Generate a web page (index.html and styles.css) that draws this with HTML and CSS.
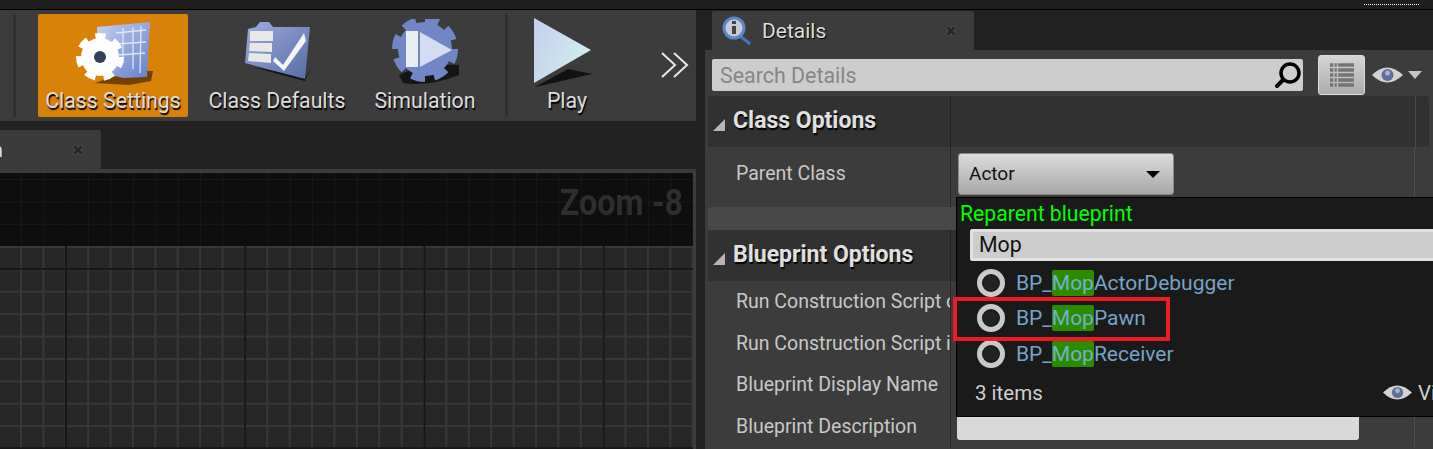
FILE: index.html
```html
<!DOCTYPE html>
<html lang="en">
<head>
  <meta charset="UTF-8">
  <meta name="viewport" content="width=device-width, initial-scale=1.0">
  <title>Blueprint Editor</title>
  <link rel="stylesheet" href="styles.css">
</head>
<body>
  <div class="top-strip">
    <span class="top-label">Parent class:</span>
    <span class="top-dots"></span>
  </div>
  <div class="editor">
    <div class="left-col">
      <div class="toolbar">
        <div class="sep sep-first"></div>
        <div class="tool-btn active">
          <svg class="tool-icon" width="84" height="66" viewBox="0 0 84 66">
            <defs>
              <linearGradient id="sheet" x1="0" y1="0" x2="1" y2="1">
                <stop offset="0" stop-color="#c6d0f0"/>
                <stop offset="1" stop-color="#6480cc"/>
              </linearGradient>
              <filter id="soft"><feGaussianBlur stdDeviation="0.5"/></filter>
            </defs>
            <path d="M24 62 L58 64 L80 60 L82 50 L60 50Z" fill="#5a3300" opacity="0.8" filter="url(#soft)"/>
            <path d="M26 6 L79 1 L76 56 L52 57 L26 50Z" fill="url(#sheet)"/>
            <path d="M45 12 L75 9 M46 23 L75 21 M48 34 L74 32 M52 7 L52 42 M62 6 L62 48 M70 5 L69 52" stroke="#e7ecfb" stroke-width="1.3" fill="none" opacity="0.9"/>
            <g filter="url(#soft)">
              <circle cx="29" cy="36" r="19" fill="#fff"/>
              <circle cx="29" cy="36" r="21" fill="none" stroke="#fff" stroke-width="6" pathLength="14" stroke-dasharray="1.100 .900"/>
              <circle cx="29" cy="36" r="6" fill="#33405c"/>
            </g>
          </svg>
          <span class="tool-label">Class Settings</span>
        </div>
        <div class="tool-btn defaults">
          <svg class="tool-icon" width="70" height="66" viewBox="0 0 70 66">
            <defs>
              <linearGradient id="board" x1="0" y1="0" x2="1" y2="1">
                <stop offset="0" stop-color="#9fade0"/>
                <stop offset="1" stop-color="#566aa4"/>
              </linearGradient>
            </defs>
            <path d="M10 48 L63 62 L70 46 L64 58Z" fill="#151515"/>
            <path d="M6 10 L14 8 L18 3 L27 3 L31 8 L68 8 L63 60 L3 44Z" fill="url(#board)"/>
            <path d="M8 12 L31 12 L31 22 L8 22Z M8 24 L30 24 L30 33 L7 32Z M7 34 L29 35 L29 44 L6 42Z" fill="#e8e8e8"/>
            <path d="M33 38 L41 46 L62 14 L64 22 L42 52 L31 42Z" fill="#f4f4f4"/>
          </svg>
          <span class="tool-label">Class Defaults</span>
        </div>
        <div class="tool-btn">
          <svg class="tool-icon" width="72" height="66" viewBox="0 0 72 66">
            <path d="M10 56 Q34 44 70 46 L70 56 Q40 68 14 64Z" fill="#151515"/>
            <circle cx="36" cy="30" r="27" fill="#7286c6"/>
            <circle cx="36" cy="30" r="29" fill="none" stroke="#7286c6" stroke-width="8" pathLength="16" stroke-dasharray="1.200 .800"/>
            <rect x="17" y="12" width="12" height="36" fill="#e9eef2"/>
            <path d="M31 13 L63 31 L31 48Z" fill="#d3dcf0"/>
          </svg>
          <span class="tool-label">Simulation</span>
        </div>
        <div class="sep sep-play"></div>
        <div class="tool-btn play">
          <svg class="tool-icon" width="70" height="72" viewBox="0 0 70 72">
            <defs>
              <linearGradient id="tri" x1="0" y1="0" x2="1" y2="0.4">
                <stop offset="0" stop-color="#c5cfec"/>
                <stop offset="1" stop-color="#d0ecee"/>
              </linearGradient>
            </defs>
            <path d="M3 70 L60 57 L36 52Z" fill="#111"/>
            <path d="M2 1 L59 33 L2 66Z" fill="url(#tri)"/>
          </svg>
          <span class="tool-label">Play</span>
        </div>
        <svg class="more" width="30" height="30" viewBox="0 0 30 30">
          <path d="M2 3 L15 15 L2 27 M14 3 L27 15 L14 27" fill="none" stroke="#e8e8e8" stroke-width="2"/>
        </svg>
      </div>
      <div class="tab-row">
        <div class="graph-tab">
          <span class="tab-cut">n</span>
          <span class="close">&#10006;</span>
        </div>
      </div>
      <div class="graph">
        <div class="graph-head">
          <span class="zoom-label">Zoom -8</span>
        </div>
        <div class="graph-body"></div>
      </div>
    </div>

    <div class="details">
      <div class="details-tabs">
        <div class="details-tab">
          <svg width="30" height="30" viewBox="0 0 30 30">
            <path d="M17 19 L28 28" stroke="#3f78c8" stroke-width="3"/>
            <circle cx="12" cy="12" r="10" fill="#c8ccd4" stroke="#5c86cc" stroke-width="3"/>
            <rect x="10" y="10" width="4" height="8" fill="#444"/>
            <rect x="10" y="5" width="4" height="3" fill="#444"/>
          </svg>
          <span class="details-title">Details</span>
          <span class="close">&#10006;</span>
        </div>
      </div>
      <div class="details-panel">
        <div class="search-row">
          <div class="search-box">
            <span class="search-hint">Search Details</span>
            <svg width="30" height="28" viewBox="0 0 30 28">
              <circle cx="17" cy="12" r="9" fill="none" stroke="#000" stroke-width="3.500"/>
              <path d="M10 19 L4 25" stroke="#000" stroke-width="4" stroke-linecap="round"/>
            </svg>
          </div>
          <div class="table-btn">
            <svg width="24" height="24" viewBox="0 0 24 24">
              <path d="M0 2h24M0 7h24M0 12h24M0 17h24M0 22h24" stroke="#747474" stroke-width="3.400"/>
              <path d="M4 0v24M7.500 0v24" stroke="#bcbcbc" stroke-width="1.400"/>
            </svg>
          </div>
          <svg class="eye" width="31" height="18" viewBox="0 0 31 18">
            <path d="M0 9 Q15 -6 31 9 Q15 24 0 9Z" fill="#d2d2d2"/>
            <circle cx="15.500" cy="9" r="6" fill="#5e7099"/>
            <circle cx="15.500" cy="7" r="2.500" fill="#a9b4cc"/>
          </svg>
          <span class="eye-caret"></span>
        </div>

        <div class="section-head">
          <span class="caret"></span>
          <span class="section-name">Class Options</span>
        </div>
        <div class="prop-row parent-row">
          <span class="prop-name">Parent Class</span>
          <div class="prop-value">
            <div class="combo">
              <span>Actor</span>
              <span class="combo-caret"></span>
            </div>
          </div>
        </div>
        <div class="section-gap"></div>
        <div class="section-head">
          <span class="caret"></span>
          <span class="section-name">Blueprint Options</span>
        </div>
        <div class="prop-row"><span class="prop-name">Run Construction Script on Drag</span><div class="prop-value"></div></div>
        <div class="prop-row"><span class="prop-name">Run Construction Script in Sequencer</span><div class="prop-value"></div></div>
        <div class="prop-row"><span class="prop-name">Blueprint Display Name</span><div class="prop-value"></div></div>
        <div class="prop-row"><span class="prop-name">Blueprint Description</span><div class="prop-value"><div class="desc-field"></div></div></div>
      </div>

      <div class="picker">
        <div class="picker-title">Reparent blueprint</div>
        <div class="picker-input">Mop</div>
        <div class="picker-list">
          <div class="picker-item"><span class="radio"></span><span class="bp-name">BP_<mark>Mop</mark>ActorDebugger</span></div>
          <div class="picker-item"><span class="radio"></span><span class="bp-name">BP_<mark>Mop</mark>Pawn</span></div>
          <div class="picker-item"><span class="radio"></span><span class="bp-name">BP_<mark>Mop</mark>Receiver</span></div>
        </div>
        <div class="picker-foot">
          <span>3 items</span>
          <div class="view-opts">
            <svg width="29" height="17" viewBox="0 0 31 18">
              <path d="M0 9 Q15 -6 31 9 Q15 24 0 9Z" fill="#d2d2d2"/>
              <circle cx="15.500" cy="9" r="6" fill="#5e7099"/>
              <circle cx="15.500" cy="7" r="2.500" fill="#a9b4cc"/>
            </svg>
            <span>View Options</span>
          </div>
        </div>
        <div class="highlight"></div>
      </div>
    </div>
  </div>
</body>
</html>
```
FILE: styles.css
```css
* {
  box-sizing: border-box;
}
html, body {
  margin: 0;
  padding: 0;
  height: 449px;
  overflow: hidden;
}
body {
  font-family: Roboto, "Liberation Sans", sans-serif;
  background-color: #222222;
  color: #c8c8c8;
}
.top-strip {
  height: 10px;
  background-color: #1e1e1e;
  border-bottom: 1px solid #000000;
  position: relative;
  overflow: hidden;
}
.top-label {
  position: absolute;
  left: 1233px;
  top: -18px;
  font-size: 19px;
  color: #d0d0d0;
}
.top-dots {
  position: absolute;
  left: 1364px;
  top: 4px;
  width: 55px;
  border-top: 1px dotted #ffffff;
}
.editor {
  display: flex;
  height: 439px;
}

/* left side */
.left-col {
  width: 696px;
  display: flex;
  flex-direction: column;
}
.toolbar {
  height: 111px;
  background-color: #3c3c3c;
  display: flex;
  align-items: center;
  padding-left: 13px;
}
.sep {
  width: 3px;
  height: 103px;
  background-color: #2f2f2f;
}
.sep-first {
  margin-right: 22px;
}
.sep-play {
  margin-left: 6px;
  margin-right: 8px;
}
.tool-btn {
  width: 148px;
  height: 103px;
  border-radius: 2px;
  display: flex;
  flex-direction: column;
  align-items: center;
  justify-content: flex-end;
  padding-bottom: 4px;
  position: relative;
}
.tool-btn.active {
  width: 150px;
  background-color: #d9820a;
}
.tool-btn.defaults {
  margin-left: 15px;
}
.tool-btn.play {
  width: 102px;
}
.tool-icon {
  position: absolute;
  left: 50%;
  top: 5px;
  transform: translateX(-50%);
}
.tool-btn.active .tool-icon {
  top: 7px;
}
.tool-btn.play .tool-icon {
  top: 3px;
}
.tool-label {
  font-size: 21.300px;
  line-height: 24px;
  color: #dcdcdc;
  text-shadow: 1px 2px 1px #000000;
  white-space: nowrap;
}
.more {
  margin-left: 42px;
  margin-top: -2px;
}
.tab-row {
  height: 48px;
  padding-top: 9px;
  background-color: #222222;
}
.graph-tab {
  width: 101px;
  height: 39px;
  background-color: #3a3a3a;
  border-radius: 0 2px 0 0;
  display: flex;
  align-items: center;
  justify-content: space-between;
  padding-right: 17px;
  font-size: 20px;
  overflow: hidden;
}
.tab-cut {
  margin-left: -8px;
  color: #dcdcdc;
  opacity: 0.99;
}
.close {
  font-size: 14px;
  line-height: 14px;
  color: #262626;
  text-shadow: 0 0 2px #6a6a6a;
}
.graph {
  flex: 1;
  display: flex;
  flex-direction: column;
  border-top: 4px solid #3c3c3c;
  border-right: 3px solid #3c3c3c;
}
.graph-head {
  height: 73px;
  background-color: #0e0e0e;
  background-image:
    linear-gradient(to right, #0a0a0a 0, #0a0a0a 1px, transparent 1px),
    linear-gradient(to right, #181818 0, #181818 1px, transparent 1px),
    linear-gradient(to bottom, #181818 0, #181818 1px, transparent 1px);
  background-size: 179.2px 100%, 22.4px 100%, 100% 22.4px;
  background-position: 66px 0, 21px 0, 0 6px;
  display: flex;
  justify-content: flex-end;
  align-items: flex-start;
}
.zoom-label {
  font-size: 36px;
  font-weight: 700;
  line-height: 42px;
  margin-top: 9px;
  margin-right: 10px;
  color: #2e2e2e;
  transform: scaleX(0.9);
  transform-origin: right center;
  white-space: nowrap;
}
.graph-body {
  flex: 1;
  background-color: #272727;
  background-image:
    linear-gradient(to right, #171717 0, #171717 2px, transparent 2px),
    linear-gradient(to bottom, #171717 0, #171717 2px, transparent 2px),
    linear-gradient(to right, #383838 0, #383838 2px, transparent 2px),
    linear-gradient(to bottom, #383838 0, #383838 2px, transparent 2px);
  background-size: 179.2px 100%, 100% 179.2px, 22.4px 100%, 100% 22.4px;
  background-position: 65px 0, 0 22px, 20px 0, 0 0;
}

/* details */
.details {
  flex: 1;
  min-width: 0;
  position: relative;
  display: flex;
  flex-direction: column;
  padding-left: 9px;
}
.details-tabs {
  height: 40px;
  padding: 1px 0 0 16px;
  background-color: #222222;
  margin-left: -9px;
}
.details-tab {
  width: 262px;
  height: 39px;
  background-color: #3c3c3c;
  border-radius: 2px 2px 0 0;
  display: flex;
  align-items: center;
  padding: 0 17px 0 10px;
}
.details-title {
  font-size: 21px;
  margin-left: 10px;
  flex: 1;
  color: #dcdcdc;
  text-shadow: 1px 1px 1px #000000;
}
.details-panel {
  flex: 1;
  background-color: #3c3c3c;
  padding: 0 4px 0 3px;
  display: flex;
  flex-direction: column;
}
.search-row {
  height: 46px;
  display: flex;
  align-items: center;
  padding: 4px 0 0 4px;
}
.search-box {
  width: 591px;
  height: 32px;
  background-color: #cdcdcd;
  border-radius: 2px;
  display: flex;
  align-items: center;
  justify-content: space-between;
  padding: 0 0 0 8px;
}
.search-hint {
  font-size: 21.400px;
  color: #868686;
}
.table-btn {
  width: 47px;
  height: 40px;
  margin-left: 15px;
  background: linear-gradient(#d4d4d4, #acacac);
  border: 1px solid #dddddd;
  border-radius: 3px;
  display: flex;
  align-items: center;
  justify-content: center;
}
.eye {
  margin-left: 7px;
}
.eye-caret {
  width: 0;
  height: 0;
  margin-left: 5px;
  border-left: 7px solid transparent;
  border-right: 7px solid transparent;
  border-top: 8px solid #c4c4c4;
}
.section-head {
  height: 51px;
  background-color: #313131;
  border-radius: 3px 3px 0 0;
  display: flex;
  align-items: center;
  padding-left: 5px;
  flex-shrink: 0;
  background-image:
    linear-gradient(to right, #222222 0, #222222 1px, transparent 1px),
    linear-gradient(to right, #4a4a4a 0, #4a4a4a 1px, transparent 1px);
  background-size: 1px 100%, 1px 100%;
  background-position: 242px 0, 707px 0;
  background-repeat: no-repeat;
}
.caret {
  width: 0;
  height: 0;
  border-bottom: 12px solid #b5b5b5;
  border-left: 12px solid transparent;
  margin-top: 6px;
}
.section-name {
  font-size: 23px;
  font-weight: 700;
  margin-left: 8px;
  margin-top: -2px;
  color: #e0e0e0;
  text-shadow: 1px 2px 1px #000000;
}
.prop-row {
  display: flex;
  height: 41.500px;
  flex-shrink: 0;
}
.parent-row {
  height: 60px;
}
.prop-name {
  width: 243px;
  padding-left: 28px;
  font-size: 19.500px;
  line-height: 41px;
  white-space: nowrap;
  overflow: hidden;
  border-right: 1px solid #262626;
  flex-shrink: 0;
}
.parent-row .prop-name {
  line-height: 53px;
}
.prop-value {
  flex: 1;
  padding: 6px 0 0 7px;
  border-right: 1px solid #4f4f4f;
  margin-right: 14px;
}
.combo {
  width: 216px;
  height: 42px;
  background: linear-gradient(#dcdcdc, #a8a8a8);
  border-radius: 3px;
  border: 1px solid #8a8a8a;
  color: #111111;
  font-size: 19px;
  display: flex;
  align-items: center;
  justify-content: space-between;
  padding: 0 13px 2px 10px;
}
.combo-caret {
  width: 0;
  height: 0;
  margin-top: 2px;
  border-left: 7px solid transparent;
  border-right: 7px solid transparent;
  border-top: 7px solid #000000;
}
.section-gap {
  height: 23px;
  background-color: #484848;
  border-radius: 3px;
  flex-shrink: 0;
}
.desc-field {
  width: 402px;
  height: 27px;
  margin: 1px 0 0 -1px;
  background-color: #d9d9d9;
  border-radius: 3px;
}

/* popup over the panel */
.picker {
  position: absolute;
  left: 260px;
  right: 0;
  top: 187px;
  height: 220px;
  background-color: #1a1a1a;
  border: 1px solid #000000;
  border-right: 0;
  display: flex;
  flex-direction: column;
  padding: 4px 0 0 3px;
}
.picker-title {
  font-size: 21.200px;
  line-height: 24px;
  color: #00ff00;
}
.picker-input {
  margin: 3px 0 0 10px;
  height: 32px;
  background-color: #cdcdcd;
  border: 3px solid #e0e0e0;
  border-right: 0;
  border-radius: 3px 0 0 3px;
  color: #111111;
  font-size: 21.300px;
  line-height: 25px;
  padding-left: 6px;
}
.picker-list {
  padding: 4px 0 0 17px;
}
.picker-item {
  display: flex;
  align-items: center;
  height: 35.500px;
}
.radio {
  width: 28px;
  height: 28px;
  border-radius: 50%;
  border: 5px solid #c9c9c9;
  background-color: #222222;
  box-shadow: inset 0 0 2px #000000;
}
.bp-name {
  margin-left: 11px;
  font-size: 21px;
  color: #76a3c8;
  white-space: nowrap;
}
mark {
  background-color: #2d8b00;
  color: #74b0cc;
  border-radius: 2px;
  padding: 1px 0;
}
.picker-foot {
  display: flex;
  align-items: center;
  justify-content: space-between;
  font-size: 20.500px;
  padding-left: 15px;
  margin-top: 6px;
  height: 30px;
  color: #d0d0d0;
}
.view-opts {
  display: flex;
  align-items: center;
  gap: 6px;
  width: 50px;
  overflow: hidden;
  white-space: nowrap;
}
.view-opts svg {
  flex-shrink: 0;
}
.highlight {
  position: absolute;
  left: -4px;
  top: 99px;
  width: 217px;
  height: 44px;
  border: 4px solid #ed1c24;
}
```
